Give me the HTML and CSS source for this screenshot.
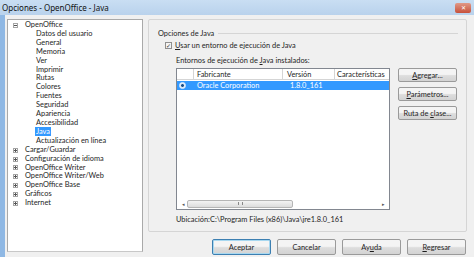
FILE: index.html
```html
<!DOCTYPE html>
<html lang="es">
  <head>
    <meta charset="UTF-8" />
    <title>Opciones - OpenOffice - Java</title>
    <link rel="stylesheet" href="styles.css">
  </head>
  <body>
    <div class="window">
      <div class="titlebar">
        <span class="title">Opciones - OpenOffice - Java</span>
        <span class="close">&#x2715;</span>
      </div>
      <div class="dialog">
        <div class="main">
          <ul class="tree">
            <li class="node"><span class="expander minus"></span>OpenOffice</li>
            <li class="leaf">Datos del usuario</li>
            <li class="leaf">General</li>
            <li class="leaf">Memoria</li>
            <li class="leaf">Ver</li>
            <li class="leaf">Imprimir</li>
            <li class="leaf">Rutas</li>
            <li class="leaf">Colores</li>
            <li class="leaf">Fuentes</li>
            <li class="leaf">Seguridad</li>
            <li class="leaf">Apariencia</li>
            <li class="leaf">Accesibilidad</li>
            <li class="leaf"><span class="selected">Java</span></li>
            <li class="leaf">Actualización en línea</li>
            <li class="node"><span class="expander"></span>Cargar/Guardar</li>
            <li class="node"><span class="expander"></span>Configuración de idioma</li>
            <li class="node"><span class="expander"></span>OpenOffice Writer</li>
            <li class="node"><span class="expander"></span>OpenOffice Writer/Web</li>
            <li class="node"><span class="expander"></span>OpenOffice Base</li>
            <li class="node"><span class="expander"></span>Gráficos</li>
            <li class="node"><span class="expander"></span>Internet</li>
          </ul>
          <div class="side">
            <div class="panel">
              <div class="legend">
                <span>Opciones de Java</span>
                <span class="rule"></span>
              </div>
              <label class="check-row">
                <span class="checkbox">&#x2713;</span>
                <span><u>U</u>sar un entorno de ejecución de Java</span>
              </label>
              <div class="installed">
                <div class="caption">Entornos de ejecución de <u>J</u>ava instalados:</div>
                <div class="jre-row">
                  <div class="table">
                    <div class="thead">
                      <span class="col-radio"></span>
                      <span class="col-vendor">Fabricante</span>
                      <span class="col-version">Versión</span>
                      <span class="col-features">Características</span>
                    </div>
                    <div class="trow active">
                      <span class="col-radio"><span class="radio"></span></span>
                      <span class="col-vendor">Oracle Corporation</span>
                      <span class="col-version">1.8.0_161</span>
                      <span class="col-features"></span>
                    </div>
                    <div class="tbody"></div>
                    <div class="hscroll">
                      <span class="arrow">&#x25C2;</span>
                      <div class="track">
                        <div class="thumb"><span class="grip"></span></div>
                      </div>
                      <span class="arrow">&#x25B8;</span>
                    </div>
                  </div>
                  <div class="side-buttons">
                    <button class="btn"><u>A</u>gregar...</button>
                    <button class="btn"><u>P</u>arámetros...</button>
                    <button class="btn">Ruta de <u>c</u>lase...</button>
                  </div>
                </div>
                <div class="location">Ubicación:C:\Program Files (x86)\Java\jre1.8.0_161</div>
              </div>
            </div>
            <div class="actions">
              <button class="btn big default">Aceptar</button>
              <button class="btn big">Cancelar</button>
              <button class="btn big">Ay<u>u</u>da</button>
              <button class="btn big"><u>R</u>egresar</button>
            </div>
          </div>
        </div>
      </div>
    </div>
  </body>
</html>
```

FILE: styles.css
```css
body {
  margin: 0;
  width: 474px;
  height: 257px;
  overflow: hidden;
  font-family: Lato, "Noto Sans", sans-serif;
  font-size: 7.4px;
  color: #1e1e1e;
  background: #f0f0f0;
}
.window {
  height: 257px;
  border-left: 5px solid #8fb8e4;
  background: #f0f0f0;
  box-sizing: border-box;
}
.titlebar {
  height: 15px;
  margin-left: -5px;
  padding-left: 2px;
  display: flex;
  align-items: center;
  justify-content: space-between;
  background: linear-gradient(#c9def3, #b9d2ec);
}
.title {
  font-family: "Noto Sans", sans-serif;
  font-size: 8px;
  color: #111;
}
.close {
  width: 16px;
  height: 10px;
  margin-right: 3px;
  border-radius: 2px;
  background: linear-gradient(#e09a88, #c7503a);
  color: #fff;
  font-size: 6px;
  line-height: 10px;
  text-align: center;
}
.dialog {
  padding: 4px 0 0 2px;
}
.main {
  display: flex;
  gap: 5px;
}
.tree {
  list-style: none;
  margin: 0;
  padding: 1px 0 0 0;
  width: 136px;
  height: 233px;
  box-sizing: border-box;
  background: #fff;
  border: 1px solid #a9a9a9;
  border-bottom-color: #c8c8c8;
}
.tree li {
  height: 8.92px;
  line-height: 8.92px;
  white-space: nowrap;
}
.node {
  display: flex;
  align-items: center;
  padding-left: 5px;
}
.leaf {
  padding-left: 28px;
}
.expander {
  position: relative;
  width: 5px;
  height: 5px;
  margin-right: 7px;
  border: 1px solid #a5a5a5;
  box-sizing: border-box;
}
.expander::before,
.expander::after {
  content: "";
  position: absolute;
  background: #555;
}
.expander::before {
  left: 0;
  top: 1px;
  width: 3px;
  height: 1px;
}
.expander::after {
  left: 1px;
  top: 0;
  width: 1px;
  height: 3px;
}
.expander.minus::after {
  display: none;
}
.selected {
  background: #3399ff;
  color: #fff;
  padding: 0 1px;
  margin-left: -1px;
}
.side {
  display: flex;
  flex-direction: column;
}
.panel {
  width: 319px;
  height: 213px;
  box-sizing: border-box;
  border: 1px solid #d5d5d5;
  border-radius: 2px;
  padding-top: 9px;
}
.legend {
  display: flex;
  align-items: center;
  margin: 0 8px 0 9px;
  height: 9px;
}
.rule {
  flex: 1;
  height: 1px;
  margin-left: 4px;
  background: #d5d5d5;
}
.check-row {
  display: flex;
  align-items: center;
  margin: 3px 0 0 16px;
  height: 9px;
  gap: 3px;
}
.checkbox {
  width: 7px;
  height: 7px;
  box-sizing: border-box;
  border: 1px solid #8f8f8f;
  background: #f4f4f4;
  color: #333;
  font-size: 6px;
  line-height: 5px;
  text-align: center;
}
.installed {
  margin-left: 27px;
}
.caption {
  margin-top: 6px;
  height: 9px;
  line-height: 9px;
}
.jre-row {
  display: flex;
  margin-top: 3px;
}
.table {
  width: 214px;
  height: 142px;
  box-sizing: border-box;
  border: 1px solid #828790;
  background: #fff;
  display: flex;
  flex-direction: column;
}
.thead,
.trow {
  display: flex;
  height: 11px;
  line-height: 11px;
}
.thead span {
  border-right: 1px solid #d5d5d5;
  border-bottom: 1px solid #d5d5d5;
  box-sizing: border-box;
}
.trow {
  height: 9px;
  line-height: 9px;
  margin-top: 1px;
}
.active {
  background: #3399ff;
  color: #fff;
}
.col-radio {
  width: 17px;
  display: flex;
  align-items: center;
  padding-left: 2px;
  box-sizing: border-box;
}
.col-vendor {
  width: 89px;
  padding-left: 3px;
}
.col-version {
  width: 52px;
  padding-left: 4px;
}
.col-features {
  flex: 1;
  padding-left: 2px;
}
.thead .col-features {
  border-right: none;
}
.radio {
  width: 5px;
  height: 5px;
  border-radius: 50%;
  border: 1px solid #e8f2ff;
  background: radial-gradient(#1b4f8a 35%, #dbe8f6 45%);
}
.tbody {
  flex: 1;
}
.hscroll {
  display: flex;
  align-items: center;
  height: 9px;
  margin: 0 2px 1px 2px;
  font-size: 5px;
  color: #555;
}
.arrow {
  width: 8px;
  text-align: center;
}
.track {
  flex: 1;
  height: 8px;
  display: flex;
}
.thumb {
  width: 106px;
  height: 8px;
  box-sizing: border-box;
  border: 1px solid #b5b5b5;
  border-radius: 2px;
  background: linear-gradient(#f3f3f3, #dcdcdc);
  display: flex;
  justify-content: center;
  align-items: center;
}
.grip {
  width: 5px;
  height: 3px;
  border-left: 1px solid #888;
  border-right: 1px solid #888;
  box-sizing: border-box;
}
.side-buttons {
  display: flex;
  flex-direction: column;
  gap: 5px;
  margin-left: 8px;
}
.btn {
  width: 59px;
  height: 14px;
  padding: 0;
  box-sizing: border-box;
  border: 1px solid #9a9a9a;
  border-radius: 2px;
  background: linear-gradient(#f4f4f4 45%, #dddddd 55%, #d3d3d3);
  font-family: Lato, "Noto Sans", sans-serif;
  font-size: 7.4px;
  color: #1e1e1e;
}
.location {
  margin-top: 5px;
  height: 9px;
  line-height: 9px;
}
.actions {
  display: flex;
  justify-content: flex-end;
  gap: 6px;
  margin-top: 7px;
  padding-right: 1px;
}
.btn.big {
  width: 59px;
  height: 16px;
}
.btn.default {
  border-color: #3c7fb1;
  box-shadow: inset 0 0 0 1px #a8d8f0;
}
```
